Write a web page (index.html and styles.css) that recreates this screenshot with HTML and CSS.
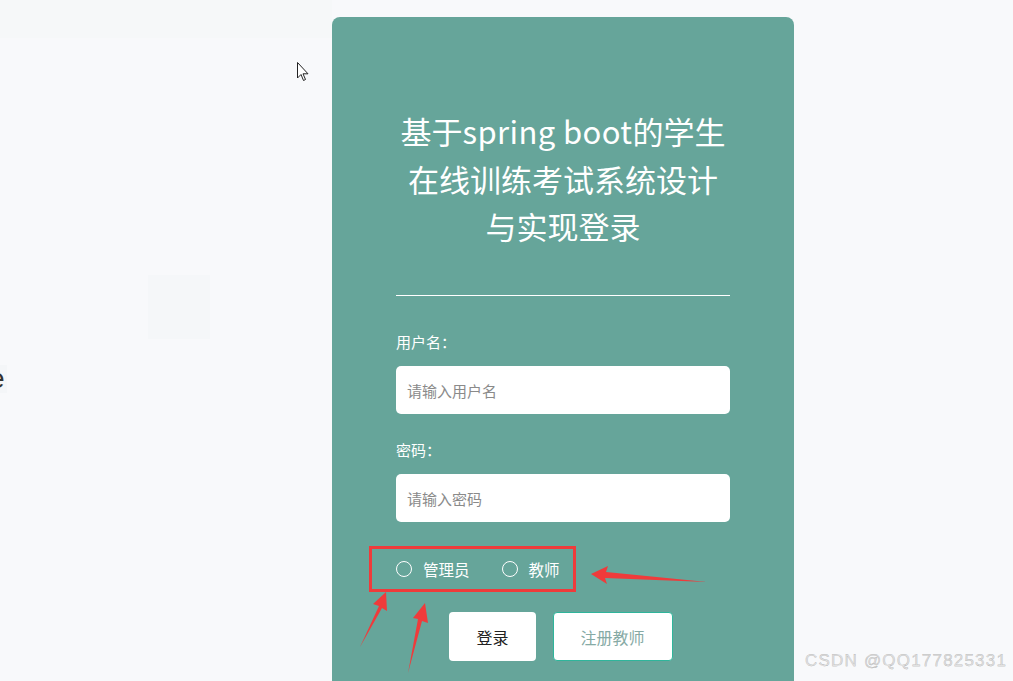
FILE: index.html
```html
<!DOCTYPE html>
<html lang="zh-CN">
<head>
<meta charset="utf-8">
<title>登录</title>
<link rel="stylesheet" href="styles.css">
</head>
<body>
<div class="page">
  <div class="left">
    <div class="topband"></div>
    <div class="ghost"></div>
    <div class="brand">e</div>
  </div>
  <div class="card">
    <h1 class="title">基于<span class="latin">spring boot</span>的学生<br>在线训练考试系统设计<br>与实现登录</h1>
    <div class="divider"></div>
    <div class="field">
      <div class="label">用户名：</div>
      <div class="input"><span class="ph">请输入用户名</span></div>
    </div>
    <div class="field second">
      <div class="label">密码：</div>
      <div class="input"><span class="ph">请输入密码</span></div>
    </div>
    <div class="roles">
      <div class="role"><span class="radio"></span><span>管理员</span></div>
      <div class="role"><span class="radio"></span><span>教师</span></div>
    </div>
    <div class="actions">
      <div class="btn">登录</div>
      <div class="btn outline">注册教师</div>
    </div>
  </div>
  <div class="right"></div>
</div>

<svg class="overlay" width="1013" height="681" viewBox="0 0 1013 681" xmlns="http://www.w3.org/2000/svg">
  <rect x="370.5" y="547.5" width="204" height="43" fill="none" stroke="#ef3b3b" stroke-width="3"/>
  <polygon points="591,574 608,566 606,572 707,582 605,578 607,584" fill="#ef3b3b"/>
  <polygon points="386,592 387,611 382,608 360,647 379,606 373,604" fill="#ef3b3b"/>
  <polygon points="425,603 428,623 422,621 408,673 418,619 413,618" fill="#ef3b3b"/>
  <path d="M297.5 62.5 L297.5 78 L301 74.5 L303.5 80.5 L305.5 79.5 L303 73.8 L308 73.8 Z" fill="#ffffff" stroke="#222" stroke-width="1" stroke-linejoin="round"/>
</svg>
<div class="watermark">CSDN @QQ177825331</div>
</body>
</html>
```
FILE: styles.css
```css
html, body {
  margin: 0;
  padding: 0;
  height: 100%;
  overflow: hidden;
}
body {
  background: #f8f9fb;
  font-family: "Noto Sans CJK SC", "Noto Sans", sans-serif;
  position: relative;
}
.page {
  display: flex;
  height: 681px;
  overflow: hidden;
}
.left {
  width: 332px;
  flex: none;
  display: flex;
  flex-direction: column;
  position: relative;
}
.topband {
  height: 38px;
  background: #f6f8f9;
}
.ghost {
  width: 62px;
  height: 64px;
  margin: 237px 0 0 148px;
  background: #f5f7f9;
}
.brand {
  margin: 26px 0 0 -11px;
  font-family: "Liberation Sans", sans-serif;
  font-size: 28px;
  line-height: 28px;
  color: #333;
  width: 18px;
  background: #f4f6f8;
}
.card {
  width: 462px;
  flex: none;
  margin-top: 17px;
  height: 700px;
  background: #66a59a;
  border-radius: 8px 8px 0 0;
  padding: 0 64px;
  box-sizing: border-box;
  color: #fff;
}
.right {
  flex: 1;
}
.title {
  margin: 90px 0 0 0;
  font-size: 31px;
  font-weight: 400;
  line-height: 47.5px;
  height: 143px;
  text-align: center;
  white-space: nowrap;
  letter-spacing: 0;
}
.latin {
  letter-spacing: 0.4px;
}
.divider {
  height: 1px;
  background: #ffffff;
  margin-top: 45px;
}
.field {
  margin-top: 36px;
}
.field.second {
  margin-top: 26px;
}
.label {
  font-size: 15px;
  line-height: 20px;
  height: 20px;
}
.input {
  margin-top: 14px;
  height: 48px;
  background: #fff;
  border-radius: 5px;
  display: flex;
  align-items: center;
  padding: 0 11px;
}
.ph {
  font-size: 15px;
  color: #8a8a8a;
}
.roles {
  margin-top: 37px;
  display: flex;
  align-items: center;
  gap: 32px;
  height: 20px;
  font-size: 15.5px;
}
.role {
  display: flex;
  align-items: center;
  gap: 11px;
}
.radio {
  width: 14px;
  height: 14px;
  border: 1px solid #fff;
  border-radius: 50%;
  box-sizing: content-box;
}
.actions {
  margin-top: 33px;
  display: flex;
  justify-content: center;
  gap: 17px;
  padding-right: 4px;
}
.btn {
  height: 49px;
  box-sizing: border-box;
  padding: 0 27px;
  background: #fff;
  color: #222;
  border-radius: 4px;
  font-size: 16px;
  display: flex;
  align-items: center;
  justify-content: center;
}
.btn.outline {
  border: 1px solid #2fb59b;
  color: #86aaa5;
  padding: 0 27px;
}
.overlay {
  position: absolute;
  left: 0;
  top: 0;
  pointer-events: none;
}
.watermark {
  position: absolute;
  left: 805px;
  top: 651px;
  font-family: "Liberation Sans", sans-serif;
  font-size: 17px;
  color: #e2e2e2;
  -webkit-text-stroke: 0.25px #9a9a9a;
  letter-spacing: 1.2px;
}
```
